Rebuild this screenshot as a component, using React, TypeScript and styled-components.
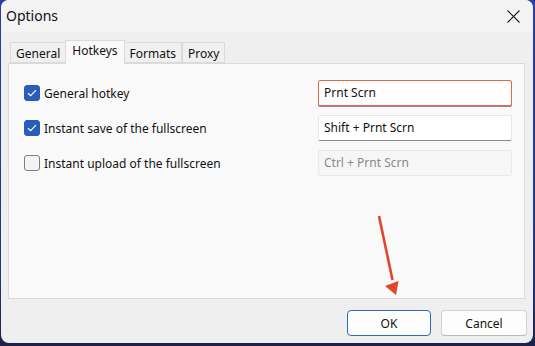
import React from "react";
import styled, { createGlobalStyle } from "styled-components";

const GlobalStyle = createGlobalStyle`
  html, body {
    margin: 0;
    padding: 0;
    background: linear-gradient(180deg, #2a3ea6 0%, #24357f 80%, #1b2147 100%);
    width: 535px;
    height: 346px;
    overflow: hidden;
  }
  * { box-sizing: border-box; }
`;

const hotkeys = [
  { label: "General hotkey", value: "Prnt Scrn", checked: true, state: "focus" },
  { label: "Instant save of the fullscreen", value: "Shift + Prnt Scrn", checked: true, state: "normal" },
  { label: "Instant upload of the fullscreen", value: "Ctrl + Prnt Scrn", checked: false, state: "disabled" },
] as const;

const tabs = ["General", "Hotkeys", "Formats", "Proxy"];

export default function App() {
  return (
    <>
      <GlobalStyle />
      <Window>
        <TitleBar>
          <Title>Options</Title>
          <CloseButton aria-label="Close">
            <svg width="13" height="13" viewBox="0 0 13 13">
              <path d="M0.5 0.5 L12.5 12.5 M12.5 0.5 L0.5 12.5" stroke="#1a1a1a" strokeWidth="1.1" fill="none" />
            </svg>
          </CloseButton>
        </TitleBar>
        <Body>
          <TabStrip>
            {tabs.map((t) => (
              <Tab key={t} $active={t === "Hotkeys"}>
                {t}
              </Tab>
            ))}
          </TabStrip>
          <Panel>
            <Rows>
              {hotkeys.map((h) => (
                <React.Fragment key={h.label}>
                  <CheckLabel>
                    <Box $checked={h.checked}>
                      {h.checked && (
                        <svg width="10" height="8" viewBox="0 0 10 8">
                          <path d="M1 4.2 L3.6 6.6 L9 1.2" stroke="#fff" strokeWidth="1.2" fill="none" />
                        </svg>
                      )}
                    </Box>
                    {h.label}
                  </CheckLabel>
                  <KeyField $state={h.state}>{h.value}</KeyField>
                </React.Fragment>
              ))}
            </Rows>
          </Panel>
        </Body>
        <Footer>
          <Button $default>OK</Button>
          <Button>Cancel</Button>
        </Footer>
        <Arrow width="40" height="90" viewBox="0 0 40 90">
          <path d="M9 6 L22.5 70" stroke="#e0472a" strokeWidth="2.6" fill="none" />
          <path d="M15 76 L28.5 71 L26 85 Z" fill="#e0472a" />
        </Arrow>
      </Window>
    </>
  );
}

const Window = styled.div`
  position: relative;
  margin-left: 1px;
  width: 532px;
  height: 343px;
  border-radius: 8px;
  background: #efefef;
  overflow: hidden;
  display: flex;
  flex-direction: column;
  font-family: "Noto Sans", "Open Sans", sans-serif;
  color: #111;
`;

const TitleBar = styled.div`
  height: 32px;
  background: #f3f3f3;
  display: flex;
  align-items: center;
  justify-content: space-between;
  padding: 0 13px 0 5px;
`;

const Title = styled.div`
  font-size: 14px;
  margin-top: -1px;
`;

const CloseButton = styled.div`
  display: flex;
  margin-top: 1px;
`;

const Body = styled.div`
  padding: 8px 8px 0 7px;
  display: flex;
  flex-direction: column;
`;

const TabStrip = styled.div`
  display: flex;
  align-items: flex-end;
  height: 23px;
  padding-left: 2px;
`;

const Tab = styled.div<{ $active?: boolean }>`
  height: ${(p) => (p.$active ? 24 : 21)}px;
  margin-bottom: ${(p) => (p.$active ? -1 : 0)}px;
  padding: ${(p) => (p.$active ? "1px 6px 0" : "2px 5px 0")};
  border: 1px solid #dadada;
  border-bottom: ${(p) => (p.$active ? "none" : "1px solid #dadada")};
  margin-left: ${(p) => (p.$active ? -1 : 0)}px;
  margin-right: ${(p) => (p.$active ? -1 : 0)}px;
  background: ${(p) => (p.$active ? "#f9f9f9" : "#f0f0f0")};
  position: relative;
  z-index: ${(p) => (p.$active ? 1 : 0)};
  font-size: 12px;
  line-height: 17px;
  color: #111;
`;

const Panel = styled.div`
  width: 517px;
  height: 236px;
  border: 1px solid #dadada;
  background: #f9f9f9;
  padding: 16px 12px 0 15px;
`;

const Rows = styled.div`
  display: grid;
  grid-template-columns: 1fr 194px;
  grid-auto-rows: 26px;
  row-gap: 9px;
  align-items: center;
`;

const CheckLabel = styled.label`
  display: flex;
  align-items: center;
  gap: 4px;
  font-size: 12px;
  color: #111;
`;

const Box = styled.span<{ $checked?: boolean }>`
  width: 16px;
  height: 16px;
  border-radius: 3px;
  display: flex;
  align-items: center;
  justify-content: center;
  background: ${(p) => (p.$checked ? "#2a5db8" : "#f4f4f4")};
  border: 1px solid ${(p) => (p.$checked ? "#2a5db8" : "#7d7d7d")};
`;

const KeyField = styled.div<{ $state: "focus" | "normal" | "disabled" }>`
  height: 26px;
  padding: 2px 5px 0;
  font-size: 12px;
  line-height: 19px;
  background: ${(p) => (p.$state === "disabled" ? "#f6f6f6" : "#ffffff")};
  color: ${(p) => (p.$state === "disabled" ? "#8a8a8a" : "#111")};
  border: 1px solid
    ${(p) => (p.$state === "focus" ? "#e8664a" : p.$state === "disabled" ? "#e9e9e9" : "#e6e6e6")};
  border-bottom-color: ${(p) =>
    p.$state === "focus" ? "#e8664a" : p.$state === "disabled" ? "#e9e9e9" : "#8a8a8a"};
  border-radius: 2px;
  box-shadow: ${(p) => (p.$state === "focus" ? "0 1px 0 #8a8a8a" : "none")};
`;

const Footer = styled.div`
  display: flex;
  justify-content: flex-end;
  gap: 10px;
  padding: 11px 6px 0 0;
`;

const Button = styled.div<{ $default?: boolean }>`
  width: ${(p) => (p.$default ? 84 : 86)}px;
  height: 26px;
  border-radius: 4px;
  background: #fdfdfd;
  border: 1px solid ${(p) => (p.$default ? "#2c6ac4" : "#d2d2d2")};
  border-bottom-color: ${(p) => (p.$default ? "#2c6ac4" : "#b8b8b8")};
  display: flex;
  align-items: center;
  justify-content: center;
  font-size: 12px;
  color: #111;
`;

const Arrow = styled.svg`
  position: absolute;
  left: 369px;
  top: 210px;
  pointer-events: none;
`;
